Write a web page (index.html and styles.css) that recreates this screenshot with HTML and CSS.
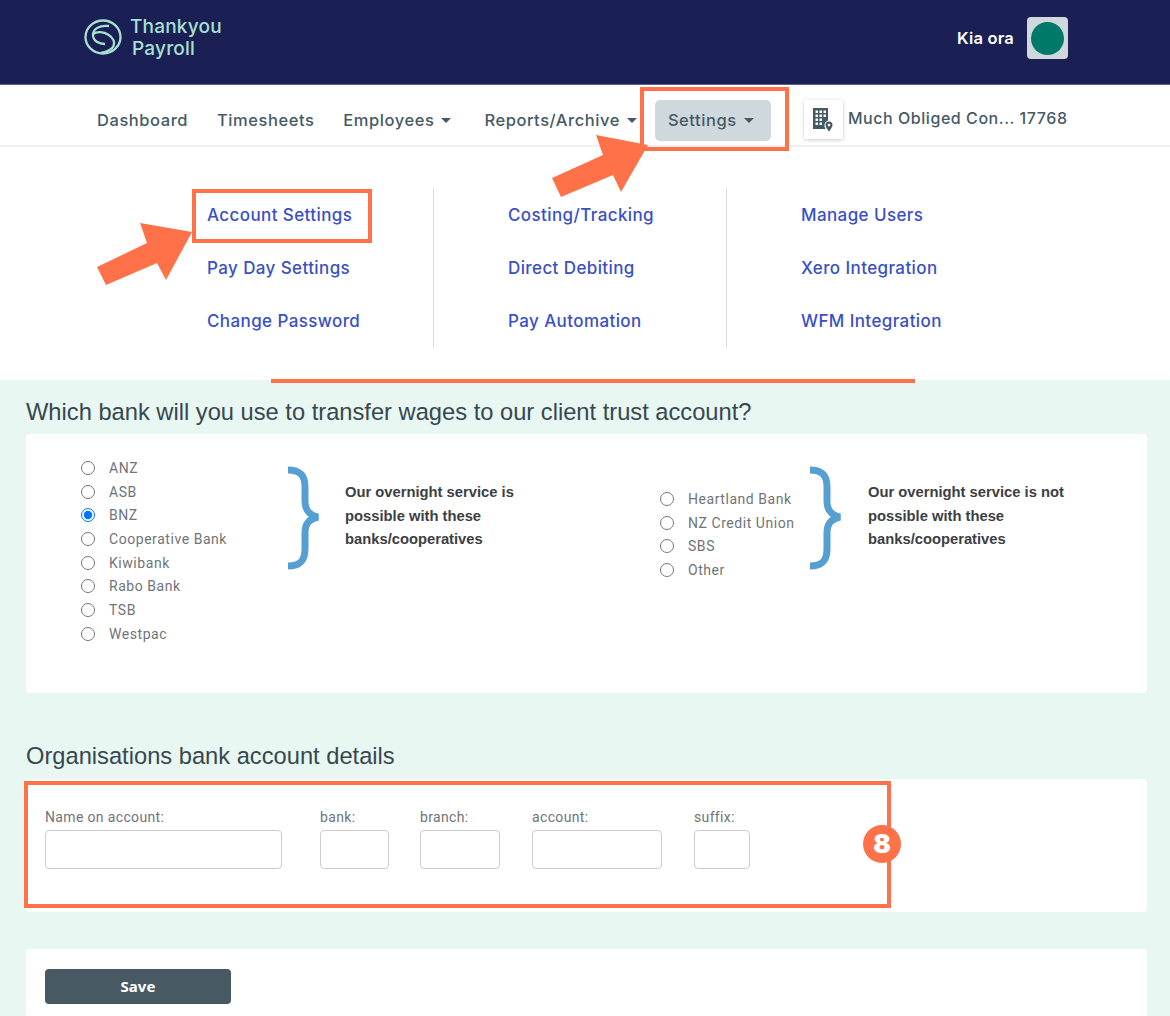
FILE: index.html
```html
<!DOCTYPE html>
<html lang="en">
<head>
    <meta charset="UTF-8">
    <title>Thankyou Payroll - Account Settings</title>
    <link rel="stylesheet" href="styles.css">
</head>
<body>
    <header class="topbar">
        <div class="logo">
            <svg class="logo-mark" width="38" height="36" viewBox="0 0 38 36" fill="none" stroke="#a8e0d2" stroke-width="2.300">
                <ellipse cx="19" cy="18" rx="17.500" ry="16.500"/>
                <path d="M25 7C15 6 9 10 9 16C9 22 15 25 21 25"/>
                <path d="M9 15C13 12 20 13 24 15.500C30 19 31 24 29.500 27C27.500 31 22 33 17 34"/>
            </svg>
            <div class="logo-text">
                <span>Thankyou</span>
                <span class="logo-line2">Payroll</span>
            </div>
        </div>
        <div class="user">
            <span class="greeting">Kia ora</span>
            <div class="avatar"><div class="avatar-dot"></div></div>
        </div>
    </header>

    <nav class="mainnav">
        <a class="nav-item">Dashboard</a>
        <a class="nav-item">Timesheets</a>
        <a class="nav-item caret">Employees</a>
        <a class="nav-item caret">Reports/Archive</a>
        <a class="nav-item caret active">Settings</a>
        <div class="org">
            <div class="org-icon">
                <svg width="22" height="25" viewBox="0 0 22 25" fill="#455a64">
                    <path fill-rule="evenodd" d="M1 1H16V13.500C13.500 14.500 12 16.500 12.500 19.500L13.500 22H1ZM3.500 3.500V6H6V3.500ZM7.500 3.500V6H10V3.500ZM11.500 3.500V6H14V3.500ZM3.500 7.500V10H6V7.500ZM7.500 7.500V10H10V7.500ZM11.500 7.500V10H14V7.500ZM3.500 11.500V14H6V11.500ZM7.500 11.500V14H10V11.500ZM3.500 15.500V18H6V15.500ZM7.500 15.500V18H10V15.500Z"/>
                    <path fill-rule="evenodd" d="M17 14.500C14.800 14.500 13.500 16 13.500 18C13.500 20 15.500 22.500 17 24.500C18.500 22.500 20.500 20 20.500 18C20.500 16 19.200 14.500 17 14.500ZM17 16.800A1.300 1.300 0 1 1 17 19.400A1.300 1.300 0 1 1 17 16.800Z"/>
                </svg>
            </div>
            <span class="org-name">Much Obliged Con... 17768</span>
        </div>
    </nav>

    <div class="settings-menu">
        <div class="menu-col col-one">
            <a>Account Settings</a>
            <a>Pay Day Settings</a>
            <a>Change Password</a>
        </div>
        <div class="menu-col col-two">
            <a>Costing/Tracking</a>
            <a>Direct Debiting</a>
            <a>Pay Automation</a>
        </div>
        <div class="menu-col col-three">
            <a>Manage Users</a>
            <a>Xero Integration</a>
            <a>WFM Integration</a>
        </div>
    </div>

    <main class="content">
        <h2 class="first-title">Which bank will you use to transfer wages to our client trust account?</h2>
        <section class="card bank-card">
            <div class="bank-group group-yes">
                <div class="radios">
                    <label><input type="radio" name="bank">ANZ</label>
                    <label><input type="radio" name="bank">ASB</label>
                    <label><input type="radio" name="bank" checked>BNZ</label>
                    <label><input type="radio" name="bank">Cooperative Bank</label>
                    <label><input type="radio" name="bank">Kiwibank</label>
                    <label><input type="radio" name="bank">Rabo Bank</label>
                    <label><input type="radio" name="bank">TSB</label>
                    <label><input type="radio" name="bank">Westpac</label>
                </div>
                <svg class="brace" width="32" height="106" viewBox="0 0 32 106" fill="none" stroke="#559fd3" stroke-width="7">
                    <path d="M0 5C12 5 17 10 17 22V36C17 45 21 50 30 52C21 54 17 59 17 68V84C17 96 12 101 0 101"/>
                </svg>
                <p class="note">Our overnight service is possible with these banks/cooperatives</p>
            </div>
            <div class="bank-group group-no">
                <div class="radios radios-short">
                    <label><input type="radio" name="bank">Heartland Bank</label>
                    <label><input type="radio" name="bank">NZ Credit Union</label>
                    <label><input type="radio" name="bank">SBS</label>
                    <label><input type="radio" name="bank">Other</label>
                </div>
                <svg class="brace" width="32" height="106" viewBox="0 0 32 106" fill="none" stroke="#559fd3" stroke-width="7">
                    <path d="M0 5C12 5 17 10 17 22V36C17 45 21 50 30 52C21 54 17 59 17 68V84C17 96 12 101 0 101"/>
                </svg>
                <p class="note">Our overnight service is not possible with these banks/cooperatives</p>
            </div>
        </section>

        <h2 class="second-title">Organisations bank account details</h2>
        <section class="card details-card">
            <div class="field f-name"><label>Name on account:</label><input type="text"></div>
            <div class="field f-bank"><label>bank:</label><input type="text"></div>
            <div class="field f-branch"><label>branch:</label><input type="text"></div>
            <div class="field f-account"><label>account:</label><input type="text"></div>
            <div class="field f-suffix"><label>suffix:</label><input type="text"></div>
        </section>

        <section class="card save-card">
            <button class="save-button">Save</button>
        </section>
    </main>

    <!-- annotations drawn over the screenshot -->
    <svg class="arrow-overlay" width="1170" height="1016" viewBox="0 0 1170 1016" fill="#ff7249">
        <polygon points="648,145 596,135 603,155 552,178 561,197 613,175 621,192"/>
        <polygon points="192,232 140,223 147,243 97,267 106,285 157,263 166,280"/>
    </svg>
    <div class="mark mark-settings"></div>
    <div class="mark mark-account"></div>
    <div class="mark-bar"></div>
    <div class="mark mark-details"></div>
    <div class="badge">8</div>
</body>
</html>
```

FILE: styles.css
```css
* {
    box-sizing: border-box;
}
html, body {
    height: 1016px;
    overflow: hidden;
}
body {
    margin: 0;
    position: relative;
    background-color: #e8f7f2;
    font-family: "Roboto", sans-serif;
    color: #455a64;
}

/* top bar */
.topbar {
    height: 85px;
    background-color: #1a1f54;
    border-bottom: 1px solid #5a5f8c;
    display: flex;
    justify-content: space-between;
    align-items: flex-start;
    padding: 17px 102px 0 84px;
}
.logo {
    display: flex;
    gap: 8px;
}
.logo-text {
    display: flex;
    flex-direction: column;
    margin-top: -1px;
    font-family: "Inter", sans-serif;
    font-size: 19px;
    font-weight: 500;
    line-height: 22px;
    color: #a8e0d2;
    letter-spacing: 0.2px;
}
.logo-line2 {
    margin-left: 2px;
}
.logo-mark {
    margin-top: 2px;
}
.user {
    display: flex;
    align-items: center;
    gap: 13px;
}
.greeting {
    font-family: "Inter", sans-serif;
    font-size: 16.500px;
    font-weight: 600;
    letter-spacing: 0.2px;
    color: #fff;
}
.avatar {
    width: 41px;
    height: 42px;
    background-color: #cfd8dc;
    border-radius: 4px;
    display: flex;
    align-items: center;
    justify-content: center;
}
.avatar-dot {
    width: 33px;
    height: 33px;
    border-radius: 50%;
    background-color: #00796b;
}

/* main nav */
.mainnav {
    height: 62px;
    background-color: #fff;
    border-bottom: 2px solid #eef0f1;
    display: flex;
    align-items: center;
    padding: 10px 0 0 97px;
    font-family: "Inter", sans-serif;
    font-size: 16.500px;
    font-weight: 500;
    letter-spacing: 0.55px;
}
.nav-item {
    margin-right: 29px;
    white-space: nowrap;
}
.caret::after {
    content: "";
    display: inline-block;
    margin-left: 7px;
    vertical-align: 3px;
    border-left: 5.500px solid transparent;
    border-right: 5.500px solid transparent;
    border-top: 5.500px solid #455a64;
}
.nav-item:nth-child(3) {
    margin-right: 33px;
}
.nav-item:nth-child(4) {
    margin-right: 18px;
}
.nav-item.active {
    width: 116px;
    height: 41px;
    line-height: 41px;
    padding-left: 13px;
    margin-right: 33px;
    background-color: #cfd8dc;
    border-radius: 5px;
}
.org {
    display: flex;
    align-items: center;
    gap: 5px;
    margin-top: -1px;
    font-size: 16px;
    letter-spacing: 0.55px;
}
.org-name {
    margin-top: -3px;
}
.org-icon {
    width: 39px;
    height: 39px;
    background-color: #fff;
    border-radius: 2px;
    box-shadow: 0 1px 4px rgba(0, 0, 0, 0.2);
    display: flex;
    align-items: center;
    justify-content: center;
}

/* settings dropdown */
.settings-menu {
    height: 233px;
    background-color: #fff;
    padding-top: 41px;
    display: flex;
    font-family: "Inter", sans-serif;
    font-size: 17px;
    font-weight: 500;
    letter-spacing: 0.4px;
    color: #3a50c4;
}
.menu-col {
    height: 160px;
    display: flex;
    flex-direction: column;
    gap: 34px;
    padding-top: 18px;
    line-height: 19px;
}
.col-one {
    width: 434px;
    padding-left: 207px;
    border-right: 1px solid #d8dcde;
}
.col-two {
    width: 293px;
    padding-left: 74px;
    border-right: 1px solid #d8dcde;
}
.col-three {
    padding-left: 74px;
}

/* page content */
.content {
    padding: 0 23px 0 26px;
}
.content h2 {
    margin: 0;
    font-family: "Liberation Sans", sans-serif;
    font-size: 23.700px;
    font-weight: 400;
    color: #37474f;
}
.first-title {
    padding-top: 19px;
    height: 54px;
    line-height: 26px;
}
.second-title {
    padding-top: 50px;
    height: 86px;
    line-height: 26px;
}
.card {
    background-color: #fff;
    border-radius: 4px;
}
.bank-card {
    height: 259px;
    display: flex;
    align-items: flex-start;
    padding: 22px 0 0 55px;
}
.bank-group {
    display: flex;
    align-items: flex-start;
}
.group-yes {
    width: 579px;
}
.radios {
    width: 207px;
    font-size: 14px;
    color: #6f7478;
}
.radios label {
    display: flex;
    align-items: center;
    height: 23.700px;
    letter-spacing: 0.55px;
}
.radios input {
    width: 14px;
    height: 14px;
    margin: 0 14px 0 0;
}
.radios-short {
    width: 150px;
    padding-top: 31px;
}
.brace {
    margin-top: 9px;
    flex-shrink: 0;
}
.note {
    margin: 25px 0 0 25px;
    width: 215px;
    font-family: "Liberation Sans", sans-serif;
    font-size: 14.750px;
    font-weight: 700;
    line-height: 23.700px;
    color: #3c4043;
}
.group-no .note {
    margin-left: 26px;
}

.details-card {
    height: 133px;
    display: flex;
    padding: 30px 0 0 19px;
}
.field label {
    display: block;
    height: 21px;
    line-height: 17px;
    font-size: 14px;
    letter-spacing: 0.35px;
    color: #6f7478;
}
.field input {
    display: block;
    height: 39px;
    width: 100%;
    border: 1px solid #c9cdd0;
    border-radius: 4px;
    background-color: #fff;
}
.f-name { width: 237px; margin-right: 38px; }
.f-bank { width: 69px; margin-right: 31px; }
.f-branch { width: 80px; margin-right: 32px; }
.f-account { width: 130px; margin-right: 32px; }
.f-suffix { width: 56px; }

.save-card {
    margin-top: 37px;
    height: 100px;
    padding: 20px 0 0 19px;
}
.save-button {
    width: 186px;
    height: 35px;
    padding: 0 0 2px;
    border: none;
    border-radius: 4px;
    background-color: #475a64;
    color: #fff;
    font-family: "Noto Sans", sans-serif;
    font-size: 15px;
    font-weight: 700;
}

/* orange annotations */
.arrow-overlay {
    position: absolute;
    left: 0;
    top: 0;
    pointer-events: none;
    z-index: 2;
}
.mark {
    position: absolute;
    border: 4px solid #ff7249;
    z-index: 1;
}
.mark-settings {
    left: 640px;
    top: 87px;
    width: 149px;
    height: 64px;
}
.mark-account {
    left: 192px;
    top: 189px;
    width: 180px;
    height: 54px;
}
.mark-details {
    left: 24px;
    top: 781px;
    width: 867px;
    height: 127px;
}
.mark-bar {
    position: absolute;
    left: 271px;
    top: 379px;
    width: 644px;
    height: 4px;
    background-color: #ff7249;
}
.badge {
    position: absolute;
    left: 863px;
    top: 825px;
    width: 38px;
    height: 38px;
    border-radius: 50%;
    background-color: #ff7249;
    color: #fff;
    font-family: "Inter", sans-serif;
    font-size: 26px;
    font-weight: 900;
    line-height: 38px;
    text-align: center;
    z-index: 2;
}
```
